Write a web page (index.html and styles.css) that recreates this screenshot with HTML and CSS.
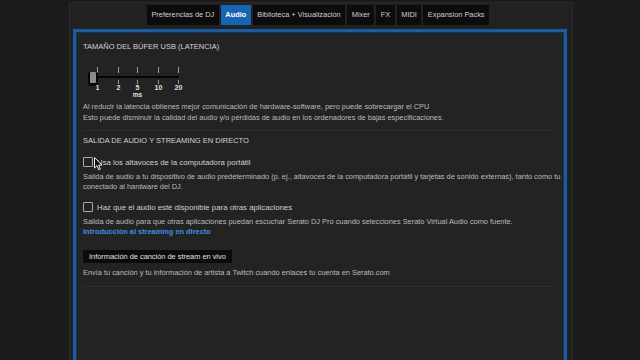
FILE: index.html
```html
<!DOCTYPE html>
<html>
    <head>
        <title>Preferencias - Audio</title>
        <link rel="stylesheet" href="styles.css">
    </head>
    <body>
        <div class="window">
            <div class="tabs">
                <div class="tab">Preferencias de DJ</div>
                <div class="tab active">Audio</div>
                <div class="tab">Biblioteca + Visualización</div>
                <div class="tab">Mixer</div>
                <div class="tab">FX</div>
                <div class="tab">MIDI</div>
                <div class="tab">Expansion Packs</div>
            </div>

            <div class="panel">
                <div class="section">
                    <p class="heading">TAMAÑO DEL BÚFER USB (LATENCIA)</p>
                    <svg class="slider" width="110" height="34" viewBox="0 0 110 34">
                        <g stroke="#9a9a9a" stroke-width="1">
                            <line x1="14.5" y1="3" x2="14.5" y2="9"/>
                            <line x1="35.5" y1="3" x2="35.5" y2="9"/>
                            <line x1="54.5" y1="3" x2="54.5" y2="9"/>
                            <line x1="75.5" y1="3" x2="75.5" y2="9"/>
                            <line x1="95.5" y1="3" x2="95.5" y2="9"/>
                            <line x1="35.5" y1="16" x2="35.5" y2="20"/>
                            <line x1="54.5" y1="16" x2="54.5" y2="20"/>
                            <line x1="75.5" y1="16" x2="75.5" y2="20"/>
                            <line x1="95.5" y1="16" x2="95.5" y2="20"/>
                        </g>
                        <line x1="11" y1="13" x2="96" y2="13" stroke="#050505" stroke-width="2"/>
                        <rect x="5" y="8" width="10" height="14" rx="2" fill="#080808"/>
                        <rect x="7" y="8" width="6" height="11" rx="1" fill="#8c8c8c"/>
                        <g class="slider-labels" text-anchor="middle">
                            <text x="14.5" y="26">1</text>
                            <text x="35.5" y="26">2</text>
                            <text x="54.5" y="26">5</text>
                            <text x="75.5" y="26">10</text>
                            <text x="95.5" y="26">20</text>
                            <text x="54.5" y="33" class="unit">ms</text>
                        </g>
                    </svg>
                    <p class="desc first">Al reducir la latencia obtienes mejor comunicación de hardware-software, pero puede sobrecargar el CPU<br>Esto puede disminuir la calidad del audio y/o pérdidas de audio en los ordenadores de bajas especificaciones.</p>
                </div>

                <div class="section">
                    <p class="heading">SALIDA DE AUDIO Y STREAMING EN DIRECTO</p>

                    <div class="check-row">
                        <span class="box"></span>
                        <span class="check-label">Usa los altavoces de la computadora portátil</span>
                        <svg class="cursor" width="9" height="14" viewBox="0 0 9 14">
                            <path d="M0.5 0.5 L0.5 11 L3 8.6 L4.8 12.8 L6.4 12.1 L4.7 8.1 L8 8.1 Z" fill="#111" stroke="#eee" stroke-width="1"/>
                        </svg>
                    </div>
                    <p class="desc">Salida de audio a tu dispositivo de audio predeterminado (p. ej., altavoces de la computadora portátil y tarjetas de sonido externas), tanto como tu<br>conectado al hardware del DJ.</p>

                    <div class="check-row second">
                        <span class="box"></span>
                        <span class="check-label">Haz que el audio esté disponible para otras aplicaciones</span>
                    </div>
                    <p class="desc">Salida de audio para que otras aplicaciones puedan escuchar Serato DJ Pro cuando selecciones Serato Virtual Audio como fuente.<br><a class="link">Introducción al streaming en directo</a></p>

                    <button class="stream-button">Información de canción de stream en vivo</button>
                    <p class="desc last">Envía tu canción y tu información de artista a Twitch cuando enlaces tu cuenta en Serato.com</p>
                </div>
            </div>
        </div>
    </body>
</html>
```

FILE: styles.css
```css
html,
body{
    height: 360px;
    overflow: hidden;
}
body{
    margin: 0;
    background-color: #1b1b1b;
    font-family: "Liberation Sans", Arial, sans-serif;
}
.window{
    width: 502px;
    height: 357px;
    overflow: hidden;
    margin: 2px 0 0 69px;
    border: 1px solid #2b2b2b;
    border-bottom: none;
    background-color: #212121;
}
.tabs{
    display: flex;
    justify-content: center;
    gap: 2px;
    padding: 2px 0 0 0;
    margin-left: -6px;
}
.tab{
    background-color: #0c0c0c;
    color: #d0d0d0;
    font-size: 7.4px;
    height: 20px;
    line-height: 20px;
    padding: 0 4.5px;
}
.tab.active{
    background-color: #1766b4;
    color: white;
    font-weight: bold;
}
.panel{
    margin: 4px 5px 0 3px;
    height: 340px;
    border: 3px solid #1b5c9e;
    box-shadow: inset 0 0 0 1px #10365e;
    background-color: #232323;
    padding: 0 9px 0 7px;
}
.section{
    border-bottom: 1px solid #2f2f2f;
    padding-bottom: 7px;
}
.heading{
    margin: 0;
    padding-top: 10px;
    font-size: 7.5px;
    line-height: 10px;
    color: #d2d2d2;
}
.section + .section .heading{
    padding-top: 5px;
}
.slider{
    display: block;
    margin-top: 12px;
}
.slider-labels text{
    font-family: "Liberation Sans", Arial, sans-serif;
    font-size: 7px;
    font-weight: bold;
    fill: #e0e0e0;
}
.slider-labels .unit{
    font-size: 6.5px;
}
.desc{
    margin: 0;
    font-size: 7.4px;
    line-height: 10px;
    color: #bcbcbc;
    white-space: nowrap;
}
.desc.first{
    margin-top: 4px;
    line-height: 10.5px;
}
.check-row{
    position: relative;
    display: flex;
    align-items: center;
    gap: 4px;
    height: 12px;
    margin-top: 10px;
    margin-bottom: 4px;
}
.check-row.second{
    margin-top: 9px;
}
.box{
    width: 8px;
    height: 8px;
    border: 1px solid #a8a8a8;
    border-radius: 1px;
}
.check-label{
    font-size: 7.8px;
    color: #cfcfcf;
}
.cursor{
    position: absolute;
    left: 11px;
    top: 1px;
}
.link{
    color: #3c8fe0;
    font-weight: bold;
}
.stream-button{
    display: block;
    margin-top: 13px;
    margin-bottom: 5px;
    height: 13px;
    padding: 0 6px;
    border: none;
    background-color: #0b0b0b;
    color: #e2e2e2;
    font-family: "Liberation Sans", Arial, sans-serif;
    font-size: 7.4px;
}
.desc.last{
    padding-bottom: 1px;
}
```
